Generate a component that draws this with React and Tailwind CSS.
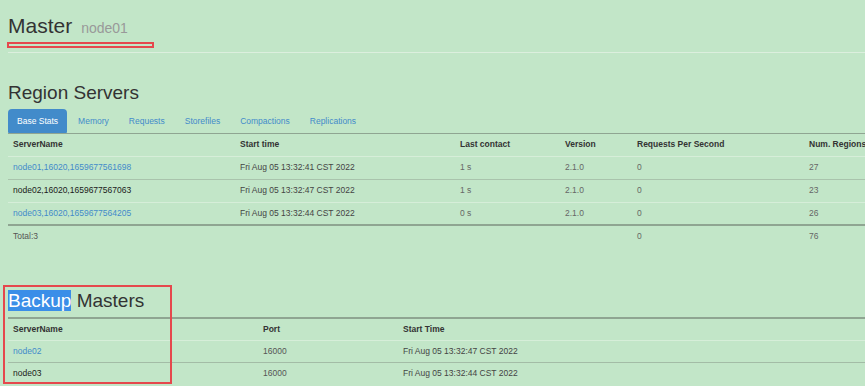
import React from 'react';

const tabs = ['Base Stats', 'Memory', 'Requests', 'Storefiles', 'Compactions', 'Replications'];

const servers = [
  { name: 'node01,16020,1659677561698', link: true, start: 'Fri Aug 05 13:32:41 CST 2022', contact: '1 s', version: '2.1.0', rps: '0', regions: '27', line: 'border-[#a9c3ac]' },
  { name: 'node02,16020,1659677567063', link: false, start: 'Fri Aug 05 13:32:47 CST 2022', contact: '1 s', version: '2.1.0', rps: '0', regions: '23', line: 'border-[#d6eed9]' },
  { name: 'node03,16020,1659677564205', link: true, start: 'Fri Aug 05 13:32:44 CST 2022', contact: '0 s', version: '2.1.0', rps: '0', regions: '26', line: 'border-transparent' },
];

const backups = [
  { name: 'node02', link: true, port: '16000', start: 'Fri Aug 05 13:32:47 CST 2022', line: 'border-[#a3bca6]' },
  { name: 'node03', link: false, port: '16000', start: 'Fri Aug 05 13:32:44 CST 2022', line: 'border-transparent' },
];

const App = () => {
  return (
    <div className="relative w-[865px] h-[386px] overflow-hidden bg-[#c2e6c8] font-['Liberation_Sans',Arial,sans-serif] text-[#333]">
      {/* page header */}
      <div className="pl-2 pt-[14px]">
        <div className="border-b border-[#dcefde] pb-[12px]">
          <h1 className="flex items-baseline text-[21px] leading-[23px] text-[#333]">
            Master
            <span className="ml-[9px] text-[14px] text-[#999]">node01</span>
          </h1>
        </div>
      </div>

      {/* region servers */}
      <div className="pl-2">
        <h2 className="mt-[29px] text-[19px] leading-[21px] text-[#333]">Region Servers</h2>

        <div className="mt-[6px] flex gap-[2px] border-b border-[#8fa592]">
          {tabs.map((t, i) => (
            <div
              key={t}
              className={`h-[24px] flex items-center px-[9px] text-[8.5px] ${
                i === 0 ? 'bg-[#428bca] text-white rounded-t-[4px] rounded-b-[1px]' : 'text-[#428bca]'
              }`}
            >
              {t}
            </div>
          ))}
        </div>

        <table className="table-fixed border-collapse w-[900px] text-[8.5px]">
          <colgroup>
            <col className="w-[227px]" />
            <col className="w-[220px]" />
            <col className="w-[105px]" />
            <col className="w-[72px]" />
            <col className="w-[172px]" />
            <col className="w-[104px]" />
          </colgroup>
          <thead>
            <tr className="h-[22px] border-b border-[#d6eed9] font-bold text-[#333] text-left">
              <th className="px-[5px] font-bold">ServerName</th>
              <th className="px-[5px] font-bold">Start time</th>
              <th className="px-[5px] font-bold">Last contact</th>
              <th className="px-[5px] font-bold">Version</th>
              <th className="px-[5px] font-bold">Requests Per Second</th>
              <th className="px-[5px] font-bold whitespace-nowrap">Num. Regions</th>
            </tr>
          </thead>
          <tbody>
            {servers.map((s) => (
              <tr key={s.name} className={`h-[23px] border-b ${s.line}`}>
                <td className={`px-[5px] ${s.link ? 'text-[#428bca]' : 'text-[#1a1a1a]'}`}>{s.name}</td>
                <td className="px-[5px] text-[#444]">{s.start}</td>
                <td className="px-[5px] text-[#666]">{s.contact}</td>
                <td className="px-[5px] text-[#666]">{s.version}</td>
                <td className="px-[5px] text-[#666]">{s.rps}</td>
                <td className="px-[5px] text-[#666]">{s.regions}</td>
              </tr>
            ))}
            <tr className="h-[22px] border-t-2 border-[#8fa592]">
              <td className="px-[5px] text-[#555]">Total:3</td>
              <td />
              <td />
              <td />
              <td className="px-[5px] text-[#666]">0</td>
              <td className="px-[5px] text-[#666]">76</td>
            </tr>
          </tbody>
        </table>

        {/* backup masters */}
        <h2 className="mt-[43px] text-[19px] leading-[21px] text-[#333]">
          <span className="bg-[#3a8ee8] text-white">Backup</span> Masters
        </h2>

        <table className="mt-[6px] table-fixed border-collapse w-[900px] text-[8.5px] border-t-2 border-[#8fa592]">
          <colgroup>
            <col className="w-[250px]" />
            <col className="w-[140px]" />
            <col />
          </colgroup>
          <thead>
            <tr className="h-[22px] border-b border-[#d6eed9] text-left">
              <th className="px-[5px] font-bold">ServerName</th>
              <th className="px-[5px] font-bold">Port</th>
              <th className="px-[5px] font-bold">Start Time</th>
            </tr>
          </thead>
          <tbody>
            {backups.map((b) => (
              <tr key={b.name} className={`h-[22px] border-b ${b.line}`}>
                <td className={`px-[5px] ${b.link ? 'text-[#428bca]' : 'text-[#1a1a1a]'}`}>{b.name}</td>
                <td className="px-[5px] text-[#555]">{b.port}</td>
                <td className="px-[5px] text-[#444]">{b.start}</td>
              </tr>
            ))}
          </tbody>
        </table>
      </div>

      {/* annotation boxes */}
      <div className="absolute left-[7px] top-[42px] w-[147px] h-[6px] border-2 border-[#e5484d]" />
      <div className="absolute left-[3px] top-[285px] w-[169px] h-[99px] border-2 border-[#e5484d]" />
    </div>
  );
};

export default App;
